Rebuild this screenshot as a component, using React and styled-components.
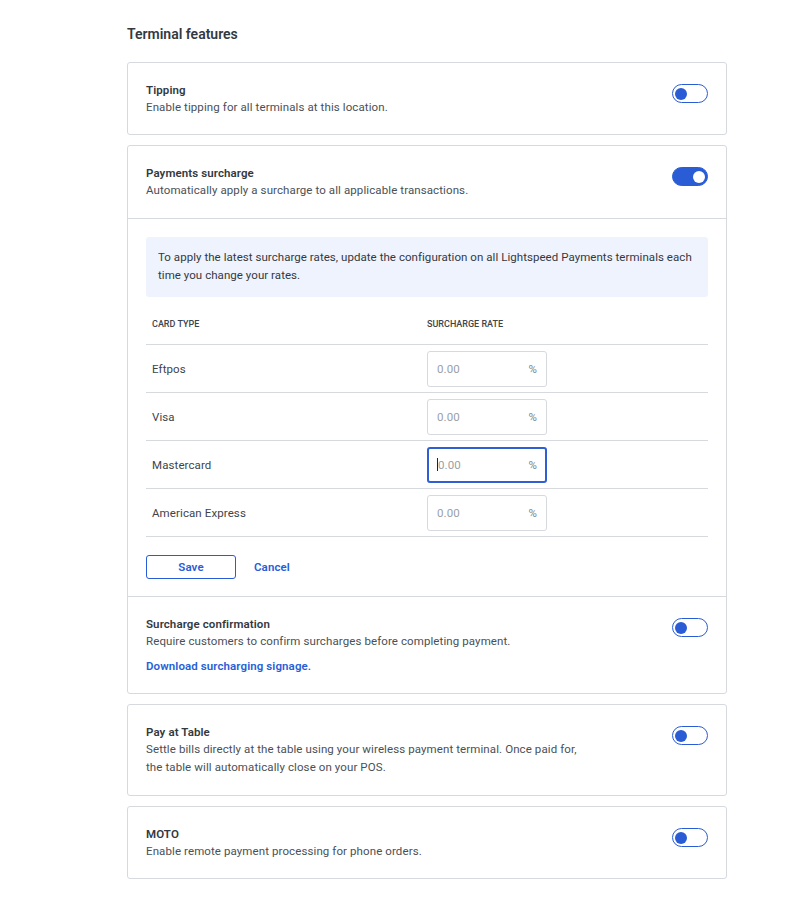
import styled, {createGlobalStyle} from "styled-components";

const GlobalStyle = createGlobalStyle`
    body {
        margin: 0;
        background: #ffffff;
        font-family: Roboto, "Liberation Sans", Arial, sans-serif;
        color: #333a40;
    }
`;

const cardTypes = ['Eftpos', 'Visa', 'Mastercard', 'American Express'];

const Toggle = ({on}) => (
    <Switch $on={on}>
        <Knob $on={on}/>
    </Switch>
);

const RateInput = ({focused}) => (
    <InputBox $focused={focused}>
        {focused && <Caret/>}
        <Placeholder>0.00</Placeholder>
        <Unit>%</Unit>
    </InputBox>
);

const App = () => {
    return (
        <>
            <GlobalStyle/>
            <Page>
                <Heading>Terminal features</Heading>

                <Card>
                    <FeatureRow>
                        <FeatureText>
                            <Title>Tipping</Title>
                            <Desc>Enable tipping for all terminals at this location.</Desc>
                        </FeatureText>
                        <Toggle/>
                    </FeatureRow>
                </Card>

                <Card>
                    <FeatureRow $pb={19}>
                        <FeatureText>
                            <Title>Payments surcharge</Title>
                            <Desc>Automatically apply a surcharge to all applicable transactions.</Desc>
                        </FeatureText>
                        <Toggle on/>
                    </FeatureRow>
                    <SurchargeBody>
                        <InfoBox>
                            To apply the latest surcharge rates, update the configuration on all Lightspeed Payments terminals each
                            time you change your rates.
                        </InfoBox>
                        <RateTable>
                            <HeadRow>
                                <HeadCell>Card type</HeadCell>
                                <HeadCell>Surcharge rate</HeadCell>
                            </HeadRow>
                            {cardTypes.map((name) => (
                                <RateRow key={name}>
                                    <RowLabel>{name}</RowLabel>
                                    <RateInput focused={name === 'Mastercard'}/>
                                </RateRow>
                            ))}
                        </RateTable>
                        <Actions>
                            <SaveButton>Save</SaveButton>
                            <LinkButton>Cancel</LinkButton>
                        </Actions>
                    </SurchargeBody>
                    <FeatureRow $divided>
                        <FeatureText>
                            <Title>Surcharge confirmation</Title>
                            <Desc>Require customers to confirm surcharges before completing payment.</Desc>
                            <Link>Download surcharging signage.</Link>
                        </FeatureText>
                        <Toggle/>
                    </FeatureRow>
                </Card>

                <Card>
                    <FeatureRow $pb={19}>
                        <FeatureText>
                            <Title>Pay at Table</Title>
                            <Desc>
                                Settle bills directly at the table using your wireless payment terminal. Once paid for,
                                <br/>
                                the table will automatically close on your POS.
                            </Desc>
                        </FeatureText>
                        <Toggle/>
                    </FeatureRow>
                </Card>

                <Card>
                    <FeatureRow>
                        <FeatureText>
                            <Title>MOTO</Title>
                            <Desc>Enable remote payment processing for phone orders.</Desc>
                        </FeatureText>
                        <Toggle/>
                    </FeatureRow>
                </Card>
            </Page>
        </>
    );
}

const Page = styled.div`
    width: 600px;
    margin-left: 127px;
    padding-top: 25px;
    padding-bottom: 24px;
    display: flex;
    flex-direction: column;
    gap: 10px;
    font-size: 11.5px;
    letter-spacing: 0.1px;
`

const Heading = styled.h2`
    margin: 0 0 9px;
    font-size: 14px;
    font-weight: 600;
    line-height: 18px;
    letter-spacing: 0;
    color: #33393f;
`

const Card = styled.section`
    border: 1px solid #d6dadf;
    border-radius: 3px;
    background: #ffffff;
`

const FeatureRow = styled.div`
    display: flex;
    justify-content: space-between;
    align-items: flex-start;
    padding: 19px 18px ${p => p.$pb ?? 18}px 18px;
    border-top: ${p => p.$divided ? '1px solid #d6dadf' : 'none'};
`

const FeatureText = styled.div`
    display: flex;
    flex-direction: column;
`

const Title = styled.div`
    font-weight: 600;
    line-height: 16px;
    color: #33393f;
`

const Desc = styled.div`
    line-height: 18px;
    color: #4a5056;
`

const Link = styled.a`
    margin-top: 7px;
    font-weight: 600;
    line-height: 18px;
    color: #2760d6;
    cursor: pointer;
`

const Switch = styled.div`
    flex: none;
    box-sizing: border-box;
    width: 36px;
    height: 19px;
    margin-top: 2px;
    border: 1.5px solid #2a5cd6;
    border-radius: 10px;
    background: ${p => p.$on ? '#2a5cd6' : '#ffffff'};
    display: flex;
    align-items: center;
    justify-content: ${p => p.$on ? 'flex-end' : 'flex-start'};
    padding: 0 2px;
`

const Knob = styled.div`
    width: 12px;
    height: 12px;
    border-radius: 50%;
    background: ${p => p.$on ? '#ffffff' : '#2a5cd6'};
`

const SurchargeBody = styled.div`
    border-top: 1px solid #d6dadf;
    padding: 18px 18px 17px;
`

const InfoBox = styled.div`
    background: #eff3fd;
    border-radius: 3px;
    padding: 11px 6px 13px 12px;
    line-height: 18px;
    letter-spacing: 0.05px;
    color: #33393f;
`

const RateTable = styled.div`
    margin-top: 19px;
`

const HeadRow = styled.div`
    display: grid;
    grid-template-columns: 275px 1fr;
    padding: 0 0 12px 6px;
    border-bottom: 1px solid #d6dadf;
`

const HeadCell = styled.div`
    font-size: 9px;
    font-weight: 500;
    line-height: 16px;
    letter-spacing: 0;
    text-transform: uppercase;
    color: #3e444a;
`

const RateRow = styled.div`
    display: grid;
    grid-template-columns: 275px 1fr;
    align-items: center;
    height: 47px;
    padding-left: 6px;
    border-bottom: 1px solid #d6dadf;
`

const RowLabel = styled.div`
    color: #3e444a;
`

const InputBox = styled.div`
    box-sizing: border-box;
    width: 120px;
    height: 36px;
    border: ${p => p.$focused ? '2px solid #2f5fd3' : '1px solid #d6dadf'};
    border-radius: 3px;
    display: flex;
    align-items: center;
    padding: ${p => p.$focused ? '0 8px' : '0 9px'};
`

const Caret = styled.span`
    width: 1px;
    height: 13px;
    background: #222;
`

const Placeholder = styled.span`
    flex: 1;
    color: #9aa0a6;
`

const Unit = styled.span`
    color: #7d838a;
`

const Actions = styled.div`
    display: flex;
    align-items: center;
    gap: 18px;
    margin-top: 18px;
`

const SaveButton = styled.button`
    width: 90px;
    height: 24px;
    border: 1px solid #2a5cd6;
    border-radius: 3px;
    background: #ffffff;
    color: #2a5cd6;
    font-family: inherit;
    font-size: inherit;
    letter-spacing: inherit;
    font-weight: 600;
    cursor: pointer;
`

const LinkButton = styled.button`
    border: none;
    background: none;
    padding: 0;
    color: #2a5cd6;
    font-family: inherit;
    font-size: inherit;
    letter-spacing: inherit;
    font-weight: 600;
    cursor: pointer;
`

export default App;
